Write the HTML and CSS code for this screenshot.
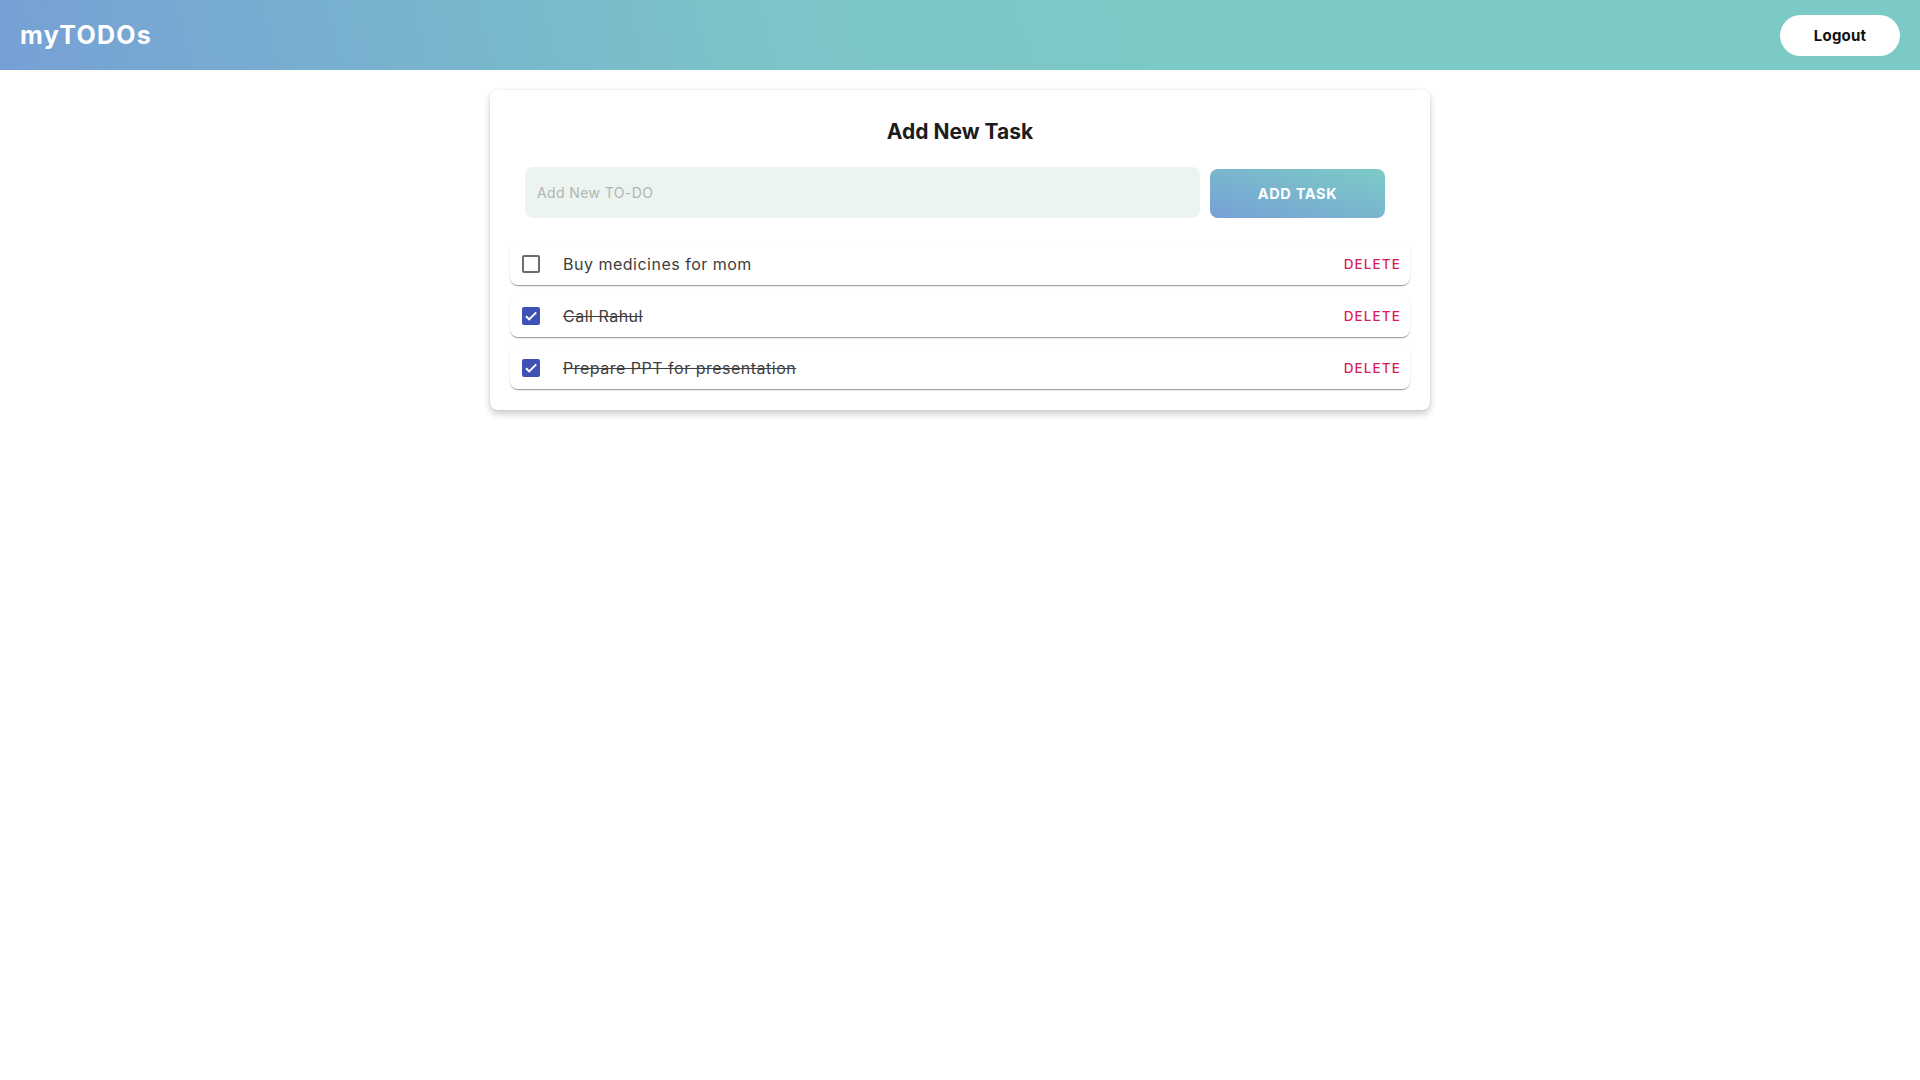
FILE: index.html
```html
<!DOCTYPE html>
<html lang="en">
<head>
<meta charset="utf-8">
<title>myTODOs</title>
<link rel="stylesheet" href="styles.css">
</head>
<body>
<header class="topbar">
  <div class="logo">myTODOs</div>
  <button class="logout">Logout</button>
</header>
<main class="page">
  <section class="card">
    <h2 class="card-title">Add New Task</h2>
    <form class="add-form">
      <input class="add-input" type="text" placeholder="Add New TO-DO">
      <button class="add-btn" type="button">ADD TASK</button>
    </form>
    <ul class="task-list">
      <li class="task">
        <span class="check"></span>
        <span class="task-text">Buy medicines for mom</span>
        <span class="delete">DELETE</span>
      </li>
      <li class="task done">
        <span class="check checked"><svg viewBox="0 0 18 18" width="18" height="18"><path d="M4 9.2l3.2 3.2L14.2 5.4" fill="none" stroke="#fff" stroke-width="2"/></svg></span>
        <span class="task-text">Call Rahul</span>
        <span class="delete">DELETE</span>
      </li>
      <li class="task done">
        <span class="check checked"><svg viewBox="0 0 18 18" width="18" height="18"><path d="M4 9.2l3.2 3.2L14.2 5.4" fill="none" stroke="#fff" stroke-width="2"/></svg></span>
        <span class="task-text">Prepare PPT for presentation</span>
        <span class="delete">DELETE</span>
      </li>
    </ul>
  </section>
</main>
</body>
</html>
```
FILE: styles.css
```css
* { box-sizing: border-box; }
html, body { min-height: 100%; }
body {
  margin: 0;
  min-height: 100vh;
  font-family: Inter, "Open Sans", sans-serif;
  background: #fff;
  color: #3c3c3c;
}
.topbar {
  height: 70px;
  padding: 0 20px;
  display: flex;
  align-items: center;
  justify-content: space-between;
  background: linear-gradient(75deg, #76a0d5 0%, #7bc4c8 40%, #7bcac6 60%, #7bcac6 100%);
}
.logo {
  color: #fff;
  font-size: 25px;
  font-weight: 700;
  letter-spacing: 1.3px;
}
.logout {
  width: 120px;
  height: 41px;
  border: none;
  border-radius: 21px;
  background: #fff;
  color: #111;
  font-family: inherit;
  font-size: 15px;
  font-weight: 700;
  letter-spacing: 0.2px;
}
.page {
  display: flex;
  justify-content: center;
  align-items: flex-start;
  padding: 20px 0 40px;
}
.card {
  width: 940px;
  padding: 20px 20px 21px;
  background: #fff;
  border-radius: 8px;
  box-shadow: 0 4px 7px rgba(0,0,0,0.2), 0 0 3px rgba(0,0,0,0.08);
}
.card-title {
  margin: 8px 0 0;
  height: 28px;
  line-height: 28px;
  text-align: center;
  font-size: 21px;
  font-weight: 700;
  color: #1c1c1c;
}
.add-form {
  margin-top: 21px;
  padding: 0 25px 0 15px;
  display: flex;
  align-items: center;
  gap: 10px;
}
.add-input {
  flex: 1;
  height: 51px;
  border: none;
  border-radius: 8px;
  background: #ecf4f1;
  padding: 0 12px;
  font-family: inherit;
  font-size: 14px;
  letter-spacing: 0.4px;
  color: #333;
  outline: none;
}
.add-input::placeholder { color: #b0b5b3; }
.add-btn {
  width: 175px;
  height: 49px;
  margin-top: 2px;
  border: none;
  border-radius: 8px;
  background: linear-gradient(to top right, #77a0d6, #7ccbc6);
  color: #fff;
  font-family: inherit;
  font-size: 14.5px;
  font-weight: 700;
  letter-spacing: 0.7px;
}
.task-list {
  list-style: none;
  margin: 25px 0 0;
  padding: 0;
  display: flex;
  flex-direction: column;
  gap: 10px;
}
.task {
  height: 42px;
  display: flex;
  align-items: center;
  padding: 0 9px 0 12px;
  background: #fff;
  border-radius: 8px;
  box-shadow: 0 2px 1px -1px rgba(0,0,0,0.25), 0 1px 1px 0 rgba(0,0,0,0.16), 0 1px 3px 0 rgba(0,0,0,0.08);
}
.check {
  width: 18px;
  height: 18px;
  border: 2px solid #6b6b6b;
  border-radius: 2px;
  flex: none;
  display: flex;
}
.check.checked {
  border: none;
  background: #3f51b5;
}
.task-text {
  flex: 1;
  margin-left: 23px;
  font-size: 16px;
  letter-spacing: 0.5px;
  color: #3e3e3e;
}
.task.done .task-text { text-decoration: line-through; }
.delete {
  color: #dc1a5c;
  font-size: 13.5px;
  font-weight: 500;
  letter-spacing: 1.1px;
}
```
